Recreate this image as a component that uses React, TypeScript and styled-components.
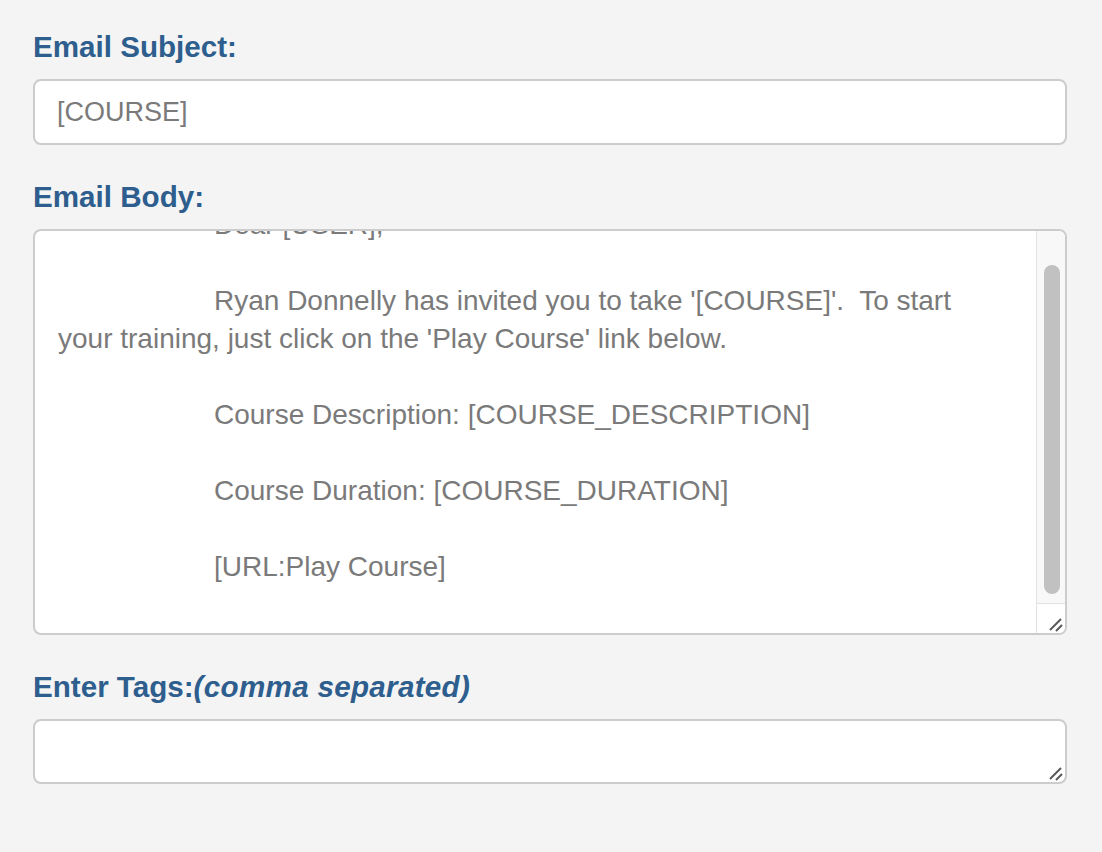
import { FC } from "react";
import styled, { createGlobalStyle } from "styled-components";

const LABEL_BLUE = "#2e5e8e";
const TEXT_GREY = "#7a7a7a";
const BORDER = "#cccccc";

const GlobalStyle = createGlobalStyle`
  html, body {
    margin: 0;
    background: #f4f4f4;
  }
  body {
    font-family: "Liberation Sans", Arial, Helvetica, sans-serif;
  }
`;

const Form = styled.div`
  display: flex;
  flex-direction: column;
  gap: 32px;
  padding: 27px 35px 40px 33px;
`;

const Field = styled.div`
  display: flex;
  flex-direction: column;
  gap: 12px;
`;

const Label = styled.label`
  height: 40px;
  font-size: 29.6px;
  line-height: 40px;
  font-weight: bold;
  color: ${LABEL_BLUE};

  em {
    font-style: italic;
    letter-spacing: 0.3px;
  }
`;

const TextInput = styled.input`
  box-sizing: border-box;
  width: 100%;
  height: 66px;
  margin: 0;
  padding: 0 22px;
  border: 2px solid ${BORDER};
  border-radius: 8px;
  background: #fff;
  font-family: "Liberation Sans", Arial, sans-serif;
  font-size: 27px;
  color: ${TEXT_GREY};
  outline: none;
`;

const Box = styled.div<{ $height: number }>`
  box-sizing: border-box;
  display: flex;
  height: ${({ $height }) => $height}px;
  border: 2px solid ${BORDER};
  border-radius: 8px;
  background: #fff;
  overflow: hidden;
`;

const Content = styled.div`
  flex: 1;
  overflow: hidden;
  padding-left: 23px;
`;

const Scrolled = styled.div`
  margin-top: -25.5px;
  font-size: 28px;
  line-height: 38px;
  color: ${TEXT_GREY};
  white-space: pre;
`;

const Line = styled.div<{ $indent?: boolean }>`
  min-height: 38px;
  padding-left: ${({ $indent }) => ($indent ? "156px" : "0")};
`;

const ScrollColumn = styled.div`
  display: flex;
  flex-direction: column;
  width: 29px;
  box-sizing: border-box;
  border-left: 1px solid #e2e2e2;
  background: #f8f8f8;
`;

const Track = styled.div`
  flex: 1;
  display: flex;
  padding: 34px 5px 9px 7px;
`;

const Thumb = styled.div`
  flex: 1;
  border-radius: 8px;
  background: #c1c1c1;
`;

const Corner = styled.div`
  display: flex;
  align-items: flex-end;
  justify-content: flex-end;
  height: 29px;
  border-top: 1px solid #e2e2e2;
  background: #fff;
`;

const TagsBox = styled(Box)`
  justify-content: flex-end;
  align-items: flex-end;
`;

const GripSvg = styled.svg`
  display: block;
  margin: 0 1px 1px 0;
`;

const Grip: FC = () => (
  <GripSvg width="16" height="16" viewBox="0 0 16 16">
    <line x1="2" y1="14" x2="13" y2="3" stroke="#585858" strokeWidth="2" />
    <line x1="8" y1="15" x2="14" y2="9" stroke="#585858" strokeWidth="2" />
  </GripSvg>
);

const bodyLines: { text: string; indent?: boolean }[] = [
  { text: "Dear [USER],", indent: true },
  { text: "" },
  { text: "Ryan Donnelly has invited you to take '[COURSE]'.  To start", indent: true },
  { text: "your training, just click on the 'Play Course' link below." },
  { text: "" },
  { text: "Course Description: [COURSE_DESCRIPTION]", indent: true },
  { text: "" },
  { text: "Course Duration: [COURSE_DURATION]", indent: true },
  { text: "" },
  { text: "[URL:Play Course]", indent: true },
  { text: "" },
];

const App: FC = () => {
  return (
    <>
      <GlobalStyle />
      <Form>
        <Field>
          <Label>Email Subject:</Label>
          <TextInput readOnly value="[COURSE]" />
        </Field>
        <Field>
          <Label>Email Body:</Label>
          <Box $height={406}>
            <Content>
              <Scrolled>
                {bodyLines.map((line, i) => (
                  <Line key={i} $indent={line.indent}>
                    {line.text}
                  </Line>
                ))}
              </Scrolled>
            </Content>
            <ScrollColumn>
              <Track>
                <Thumb />
              </Track>
              <Corner>
                <Grip />
              </Corner>
            </ScrollColumn>
          </Box>
        </Field>
        <Field>
          <Label>
            Enter Tags:<em>(comma separated)</em>
          </Label>
          <TagsBox $height={65}>
            <Grip />
          </TagsBox>
        </Field>
      </Form>
    </>
  );
};

export default App;
